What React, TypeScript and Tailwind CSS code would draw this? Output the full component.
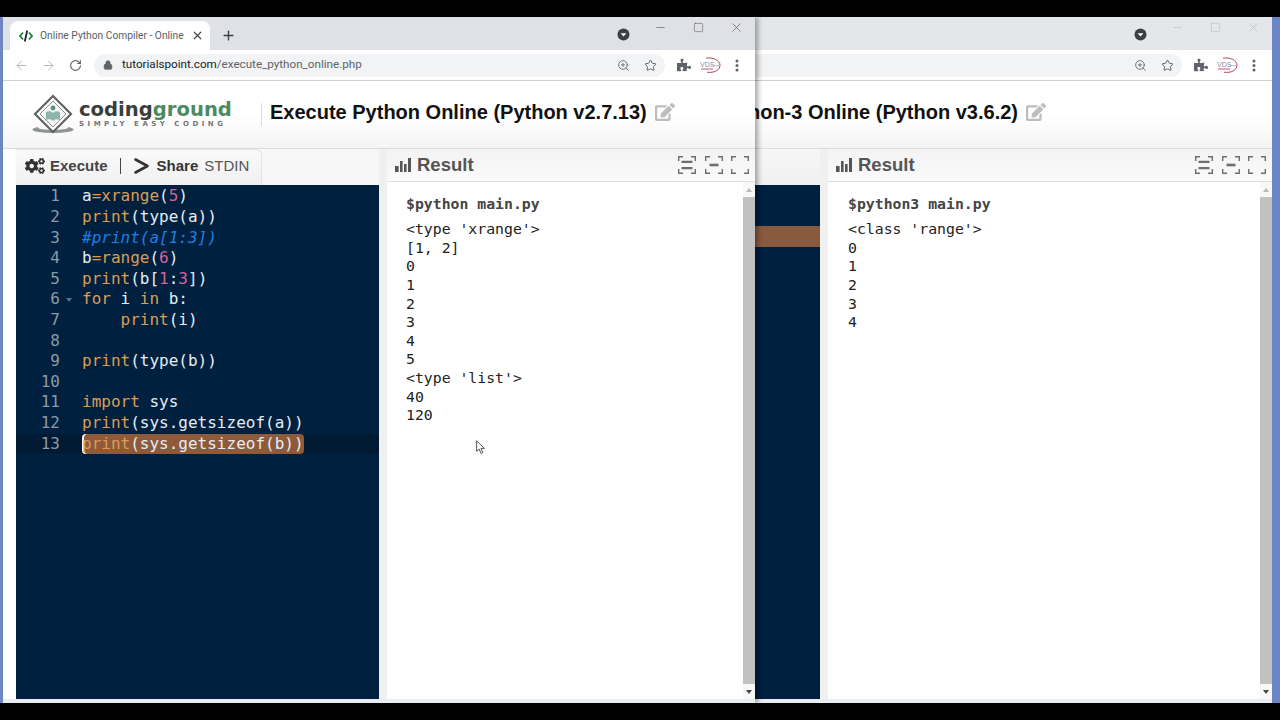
import React from "react";
import { ArrowLeft, ArrowRight, RotateCw, Lock, ZoomIn, Star, X, Plus, Minus, Square } from "lucide-react";
import { FaCogs, FaEdit, FaPuzzlePiece } from "react-icons/fa";

const W = "text-[#e6edf2]";
const O = "text-[#dc9c55]";
const P = "text-[#d9609b]";

type Tok = [string, string];
const code: Tok[][] = [
  [["a", W], ["=xrange", O], ["(", W], ["5", P], [")", W]],
  [["print", O], ["(type(a))", W]],
  [["#print(a[1:3])", "text-[#1d7fe2] italic"]],
  [["b", W], ["=range", O], ["(", W], ["6", P], [")", W]],
  [["print", O], ["(b[", W], ["1", P], [":", W], ["3", P], ["])", W]],
  [["for", O], [" i ", W], ["in", O], [" b:", W]],
  [["    print", O], ["(i)", W]],
  [],
  [["print", O], ["(type(b))", W]],
  [],
  [["import", O], [" sys", W]],
  [["print", O], ["(sys.getsizeof(a))", W]],
  [["print", O], ["(sys.getsizeof(b))", W]],
];

const outA = ["<type 'xrange'>", "[1, 2]", "0", "1", "2", "3", "4", "5", "<type 'list'>", "40", "120"];
const outB = ["<class 'range'>", "0", "1", "2", "3", "4"];

function Favicon() {
  return (
    <svg width="14" height="14" viewBox="0 0 14 14" fill="none" strokeWidth="1.8">
      <path d="M4 3.5 1 7l3 3.5" stroke="#1a7f45" />
      <path d="M10 3.5 13 7l-3 3.5" stroke="#1a7f45" />
      <path d="M8.2 1.5 5.8 12.5" stroke="#222" />
    </svg>
  );
}

function DropCircle() {
  return (
    <svg width="13" height="13" viewBox="0 0 13 13">
      <circle cx="6.5" cy="6.5" r="6" fill="#3c4043" />
      <path d="M3.6 5.2h5.8L6.5 8.6z" fill="#fff" />
    </svg>
  );
}

function Vds() {
  return (
    <svg width="21" height="17" viewBox="0 0 21 17" fill="none">
      <path d="M6 1.2c7-1.2 14 2 14 7s-6 8-13 7" stroke="#a03048" strokeWidth="0.9" />
      <text x="0" y="10" fontSize="7" fill="#8a8f9c" fontFamily="Liberation Sans, sans-serif">VDS</text>
      <path d="M1 12h12" stroke="#c9506c" strokeWidth="1" />
      <path d="M13 8.5h6" stroke="#999" strokeWidth="0.6" />
    </svg>
  );
}

function Dots() {
  return (
    <svg width="4" height="13" viewBox="0 0 4 13" fill="#5f6368">
      <circle cx="2" cy="2" r="1.5" />
      <circle cx="2" cy="6.5" r="1.5" />
      <circle cx="2" cy="11" r="1.5" />
    </svg>
  );
}

function Bars() {
  return (
    <svg width="18" height="14" viewBox="0 0 18 14" fill="#555">
      <rect x="0" y="8" width="3.6" height="6" />
      <rect x="5" y="3" width="2.6" height="11" />
      <rect x="9" y="6" width="2.6" height="8" />
      <rect x="13" y="0" width="3" height="14" />
    </svg>
  );
}

function Corners({ bars }: { bars: number }) {
  return (
    <svg width="18" height="18" viewBox="0 0 18 18" fill="none" stroke="#6e6e6e" strokeWidth="1.4">
      <path d="M.7 5V.7H5M13 .7h4.3V5M17.3 13v4.3H13M5 17.3H.7V13" />
      {bars === 2 && <path d="M3.5 5.8h11M3.5 12.2h11" strokeWidth="2.2" />}
      {bars === 1 && <path d="M4.5 9h9" strokeWidth="2.6" />}
    </svg>
  );
}

function ShareIcon() {
  return (
    <svg width="17" height="18" viewBox="0 0 17 18" fill="none" stroke="#333" strokeWidth="2.6" strokeLinecap="round" strokeLinejoin="round">
      <path d="M2.5 2.5 14.5 9 2.5 15.5" />
    </svg>
  );
}

function Logo() {
  return (
    <svg width="44" height="42" viewBox="0 0 44 42" fill="none">
      <ellipse cx="21" cy="35.5" rx="20.5" ry="3.6" fill="#8e9490" />
      <ellipse cx="21" cy="33.5" rx="15" ry="2.6" fill="#f7f7f7" />
      <path d="M21 2 39 20 21 38 3 20z" fill="#fff" stroke="#5f6361" strokeWidth="2.2" />
      <path d="M21 7 34 20 21 33 8 20z" fill="#f4f5f4" stroke="#8b908d" strokeWidth="1" />
      <path d="M14 18c3-1 5-1 7 1 2-2 4-2 7-1v8c-3-1-5-1-7 1-2-2-4-2-7-1z" fill="#8fb4ac" />
      <circle cx="21" cy="14" r="2.4" fill="#5c8d85" />
    </svg>
  );
}

function ChromeBars({ strip, front }: { strip: string; front: boolean }) {
  const winIcon = front ? "#505458" : "#b4b8bc";
  return (
    <>
      <div className={`flex h-[33px] shrink-0 items-start ${strip}`}>
        {front && (
          <>
            <div className="ml-[7px] mt-[4px] flex h-[29px] w-[200px] items-center rounded-t-[8px] bg-white pl-[9px]">
              <Favicon />
              <span className="ml-[7px] mt-[1px] w-[144px] whitespace-nowrap text-[10.25px] text-[#5b5e62] [font-family:Roboto,sans-serif]">
                Online Python Compiler - Online
              </span>
              <X size={13} color="#444" strokeWidth={2.2} className="ml-[7px]" />
            </div>
            <Plus size={15} color="#3c4043" strokeWidth={2.2} className="ml-[11px] mt-[11px]" />
          </>
        )}
        <div className="ml-auto mr-[125px] mt-[11px]">
          <DropCircle />
        </div>
      </div>
      <div className="absolute right-[11px] top-[3px] flex items-center">
        <Minus size={13} color={winIcon} strokeWidth={1.1} />
        <Square size={11} color={winIcon} strokeWidth={1.2} className="ml-[26px]" />
        <X size={15} color={winIcon} strokeWidth={1.1} className="ml-[25px]" />
      </div>
      <div className="flex h-[30px] shrink-0 items-center bg-white">
        {front && (
          <div className="flex w-[91px] items-center pl-[11px]">
            <ArrowLeft size={15} color="#b5b8bb" strokeWidth={1.6} />
            <ArrowRight size={15} color="#b5b8bb" strokeWidth={1.6} className="ml-[12px]" />
            <RotateCw size={13} color="#5f6368" strokeWidth={2} className="ml-[13px]" />
          </div>
        )}
        <div className={`flex h-[23px] flex-1 items-center rounded-r-full bg-[#f1f3f4] pr-[8px] ${front ? "rounded-l-full" : ""}`}>
          {front && (
            <>
              <Lock size={10} color="#5f6368" fill="#5f6368" className="ml-[9px]" />
              <span className="ml-[9px] whitespace-nowrap text-[11.65px] text-[#5f6368] [font-family:Roboto,sans-serif]">
                <span className="text-[#202124]">tutorialspoint.com</span>/execute_python_online.php
              </span>
            </>
          )}
          <ZoomIn size={13} color="#5f6368" strokeWidth={1.6} className="ml-auto" />
          <Star size={13} color="#5f6368" strokeWidth={1.8} className="ml-[14px]" />
        </div>
        <div className="flex w-[90px] shrink-0 items-center pl-[12px]">
          <FaPuzzlePiece size={14} color="#5f6368" />
          <span className="ml-[9px] flex"><Vds /></span>
          <span className="ml-[14px] flex"><Dots /></span>
        </div>
      </div>
      <div className="h-px shrink-0 bg-[#cfcfcf]" />
    </>
  );
}

function Title({ text }: { text: string }) {
  return (
    <div className="mb-[6px] flex shrink-0 items-center">
      <span className="whitespace-nowrap text-[20px] font-bold text-[#111] [font-family:'Liberation_Sans',sans-serif]">
        {text}
      </span>
      <FaEdit size={20} color="#bdbdbd" className="ml-[8px] shrink-0" />
    </div>
  );
}

function ResultHeader() {
  return (
    <div className="flex h-[33px] shrink-0 items-center border-b border-[#dedede] bg-gradient-to-b from-[#f3f3f3] to-[#fafafa] pl-[8px] pr-[6px]">
      <Bars />
      <span className="ml-[4px] text-[18.5px] font-bold text-[#555] [font-family:'Liberation_Sans',sans-serif]">Result</span>
      <div className="ml-auto flex gap-[8.5px]">
        <Corners bars={2} />
        <Corners bars={1} />
        <Corners bars={0} />
      </div>
    </div>
  );
}

function Scrollbar() {
  return (
    <div className="flex w-[12px] shrink-0 flex-col items-center bg-[#f8f8f8]">
      <div className="flex h-[15px] w-full shrink-0 items-center justify-center">
        <div className="h-0 w-0 border-x-[3.5px] border-b-[4px] border-x-transparent border-b-[#b8b8b8]" />
      </div>
      <div className="w-full flex-1 bg-[#c1c1c1]" />
      <div className="flex h-[15px] w-full shrink-0 items-center justify-center">
        <div className="h-0 w-0 border-x-[3.5px] border-t-[4px] border-x-transparent border-t-[#444]" />
      </div>
    </div>
  );
}

function Output({ cmd, lines, left }: { cmd: string; lines: string[]; left: string }) {
  return (
    <div className={`flex-1 bg-white pt-[12px] text-[14.8px] text-[#222] [font-family:'DejaVu_Sans_Mono',monospace] ${left}`}>
      <div className="mb-[7px] h-[19px] font-bold leading-[19px] text-[#444]">{cmd}</div>
      {lines.map((l, i) => (
        <div key={i} className="h-[18.65px] whitespace-pre leading-[18.65px]">{l}</div>
      ))}
    </div>
  );
}

function Editor() {
  return (
    <div className="flex-1 bg-[#00203f] pt-[1.4px] text-[16px] [font-family:'DejaVu_Sans_Mono',monospace]">
      {code.map((line, i) => {
        const active = i === 12;
        return (
          <div key={i} className={`flex h-[20.6px] items-center whitespace-pre leading-[20.6px] ${active ? "bg-[#001a33]" : ""}`}>
            <span className="w-[44px] shrink-0 text-right text-[#8b9aa8]">{i + 1}</span>
            <span className="flex w-[22px] shrink-0 justify-center">
              {i === 5 && <span className="mr-[4px] h-0 w-0 border-x-[3px] border-t-[4px] border-x-transparent border-t-[#5d7186]" />}
            </span>
            <span className={active ? "h-full rounded-[4px] bg-[#8f5a3a] shadow-[inset_2px_0_0_#fff]" : ""}>
              {line.map(([t, c], j) => (
                <span key={j} className={c}>{t}</span>
              ))}
            </span>
          </div>
        );
      })}
    </div>
  );
}

export default function App() {
  return (
    <div className="flex h-[720px] w-[1280px] flex-col overflow-hidden bg-black">
      <div className="h-[17px] shrink-0 bg-black" />
      <div className="flex h-[686px] shrink-0">
        <div className="w-[3px] shrink-0 bg-[#7089c4]" />

        {/* front window */}
        <div className="relative z-10 flex w-[752px] shrink-0 flex-col bg-white shadow-[3px_0_5px_rgba(0,0,0,0.35)]">
          <ChromeBars strip="bg-[#dee1e6]" front />
          <div className="flex h-[67px] shrink-0 items-center bg-gradient-to-b from-white from-50% to-[#f4f4f4] pl-[29px]">
            <Logo />
            <div className="mb-[4px] ml-[3px] flex h-[34px] w-[167px] flex-col pt-[2px] font-bold [font-family:'DejaVu_Sans',sans-serif]">
              <span className="h-[23px] whitespace-nowrap text-[19.6px] leading-[23px] text-[#3a3d3c]">
                coding<span className="text-[#4c8a63]">ground</span>
              </span>
              <span className="whitespace-nowrap text-[7px] leading-[7px] tracking-[3.5px] text-[#777]">SIMPLY EASY CODING</span>
            </div>
            <div className="ml-[15px] h-[23px] w-px bg-[#dedede]" />
            <div className="ml-[8px] flex items-center"><Title text="Execute Python Online (Python v2.7.13)" /></div>
          </div>
          <div className="h-px shrink-0 bg-[#dcdcdc]" />
          <div className="flex min-h-0 flex-1">
            <div className="w-[13px] shrink-0 bg-white" />
            <div className="flex w-[363px] shrink-0 flex-col">
              <div className="flex h-[36px] shrink-0 items-center bg-[#f7f7f7] [font-family:'Liberation_Sans',sans-serif]">
                <div className="flex h-full w-[246px] items-center rounded-tr-[6px] border-r border-t border-[#e4e4e4] bg-gradient-to-b from-[#fafafa] to-[#f0f0f0] pb-[3px] pl-[9px]">
                  <FaCogs size={20} color="#333" />
                  <span className="ml-[5px] text-[15px] font-bold text-[#444]">Execute</span>
                  <span className="ml-[12px] h-[16px] w-px bg-[#444]" />
                  <span className="ml-[12px] flex"><ShareIcon /></span>
                  <span className="ml-[7px] text-[15px] font-bold text-[#333]">Share</span>
                  <span className="ml-[6px] text-[15px] text-[#555]">STDIN</span>
                </div>
              </div>
              <Editor />
            </div>
            <div className="w-[8px] shrink-0 bg-[#f0f0f0]" />
            <div className="flex w-[368px] shrink-0 flex-col">
              <ResultHeader />
              <div className="flex min-h-0 flex-1">
                <Output cmd="$python main.py" lines={outA} left="pl-[19px]" />
                <Scrollbar />
              </div>
            </div>
          </div>
          <div className="h-[4px] shrink-0 bg-[#e9ecf0]" />
          <svg className="absolute left-[473px] top-[423px]" width="10" height="15" viewBox="0 0 10 15" fill="#fff" stroke="#444" strokeWidth="0.9">
            <path d="M.6.8v10.6l2.6-2.3 1.8 4.3 1.8-.8-1.8-4.2h3.4z" />
          </svg>
        </div>

        {/* back window */}
        <div className="relative flex w-[517px] shrink-0 flex-col bg-white">
          <ChromeBars strip="bg-[#e4e7ea]" front={false} />
          <div className="flex h-[67px] shrink-0 items-center justify-end overflow-hidden bg-gradient-to-b from-white from-50% to-[#f4f4f4] pr-[226px]">
            <Title text="Execute Python-3 Online (Python v3.6.2)" />
          </div>
          <div className="h-px shrink-0 bg-[#dcdcdc]" />
          <div className="flex min-h-0 flex-1">
            <div className="flex w-[65px] shrink-0 flex-col">
              <div className="h-[36px] shrink-0 bg-gradient-to-b from-[#f7f7f7] to-[#f0f0f0]" />
              <div className="flex-1 bg-[#00203f] pt-[41px]">
                <div className="h-[21px] bg-[#8a5a3f]" />
              </div>
            </div>
            <div className="w-[8px] shrink-0 bg-[#f0f0f0]" />
            <div className="flex min-w-0 flex-1 flex-col">
              <ResultHeader />
              <div className="flex min-h-0 flex-1">
                <Output cmd="$python3 main.py" lines={outB} left="pl-[20px]" />
                <Scrollbar />
              </div>
            </div>
          </div>
          <div className="h-[4px] shrink-0 bg-[#e9ecf0]" />
        </div>

        <div className="flex-1 bg-[#6a86c6]" />
      </div>
      <div className="flex-1 bg-black" />
    </div>
  );
}
